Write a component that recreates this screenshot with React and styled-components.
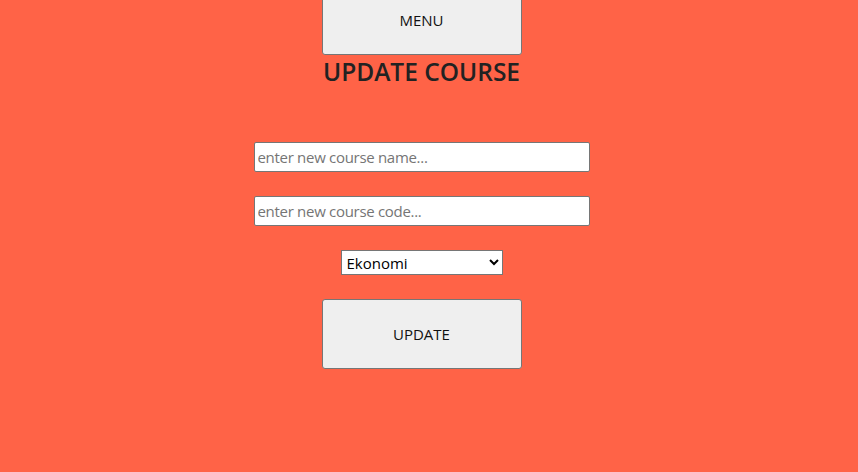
import React from "react";
import styled, { createGlobalStyle } from "styled-components";

const GlobalStyle = createGlobalStyle`
  html, body {
    margin: 0;
    padding: 0;
    background: #ff6347;
    font-family: "Open Sans", "Noto Sans", "Liberation Sans", sans-serif;
  }
  body { overflow: hidden; }
`;

const Page = styled.div`
  display: flex;
  flex-direction: column;
  align-items: center;
  padding-right: 15px;
  margin-top: -15px;
`;

const Button = styled.button`
  width: 200px;
  height: 70px;
  box-sizing: border-box;
  background: #efefef;
  border: 1px solid #767676;
  border-radius: 3px;
  font-family: inherit;
  font-size: 15px;
  color: #111;
  cursor: pointer;
`;

const Heading = styled.h2`
  margin: 0;
  font-size: 24.5px;
  font-weight: 600;
  line-height: 33px;
  color: #222;
`;

const Form = styled.form`
  display: flex;
  flex-direction: column;
  align-items: center;
  gap: 24px;
  margin-top: 54px;
`;

const Input = styled.input`
  width: 336px;
  height: 30px;
  box-sizing: border-box;
  border: 1px solid #767676;
  border-radius: 2px;
  padding: 1px 3px;
  font-family: inherit;
  font-size: 15px;
  letter-spacing: -0.3px;
  color: #000;
  background: #fff;
  &::placeholder { color: #757575; }
`;

const Select = styled.select`
  width: 162px;
  height: 25px;
  box-sizing: border-box;
  border: 1px solid #767676;
  border-radius: 0;
  padding: 0 1px;
  font-family: inherit;
  font-size: 15px;
  color: #000;
  background: #fff;
`;

export default function App() {
  return (
    <>
      <GlobalStyle />
      <Page>
        <Button type="button">MENU</Button>
        <Heading>UPDATE COURSE</Heading>
        <Form onSubmit={(e) => e.preventDefault()}>
          <Input placeholder="enter new course name..." />
          <Input placeholder="enter new course code..." />
          <Select defaultValue="Ekonomi">
            <option>Ekonomi</option>
            <option>Teknik</option>
            <option>Juridik</option>
          </Select>
          <Button type="submit">UPDATE</Button>
        </Form>
      </Page>
    </>
  );
}
